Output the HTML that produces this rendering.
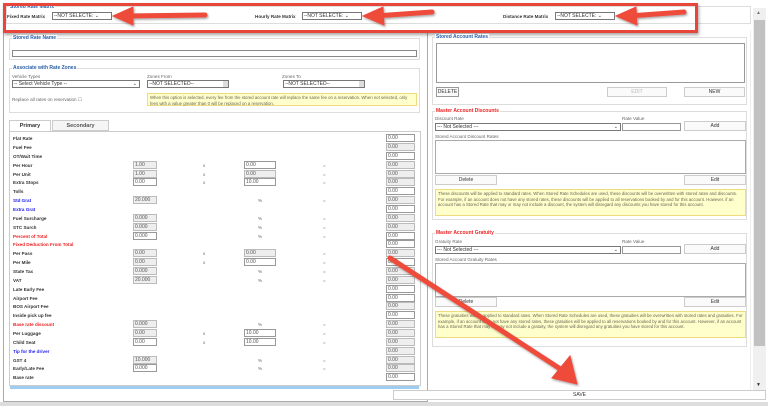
<!DOCTYPE html>
<html><head><meta charset="utf-8"><style>
*{box-sizing:border-box;margin:0;padding:0}
body{width:768px;height:406px;background:#fff;position:relative;overflow:hidden;font-family:"Liberation Sans",sans-serif;font-size:5px;color:#333}
.a{position:absolute}
.fs{position:absolute;border:1px solid #ddd}
.lg{position:absolute;top:-4px;left:2px;background:#fff;font-weight:bold;font-size:5px;color:#2a5ea8;padding:0 1px}
.lg.r{color:#e22}
.in{position:absolute;height:8px;border:1px solid #999;background:#fff;font-size:5px;padding-left:1px;line-height:6px;color:#555}
.in.g{background:#eee;border-color:#bbb}
.sel{position:absolute;height:8px;border:1px solid #777;background:#fff;font-size:5px;line-height:6px;padding-left:1px;color:#333}
.btn{position:absolute;height:10px;border:1px solid #ccc;background:#fafafa;font-size:5px;text-align:center;line-height:8px;color:#333}
.box{position:absolute;border:1px solid #aaa;background:#fff}
.note{position:absolute;background:#ffffcc;border:1px solid #eedb80;font-size:4.3px;line-height:5.5px;padding:1px 2px;color:#665}
.lb{position:absolute;font-size:4.6px;font-weight:bold;color:#333;left:13px}
.lb.b{color:#22e}.lb.r{color:#e22}
.sm{position:absolute;font-size:4.6px;color:#666}
</style></head><body>
<!-- outer frame -->
<div class="a" style="left:3px;top:30px;width:425px;height:372px;border:1px solid #aaa;border-top:none"></div>
<!-- top matrix -->
<div class="fs" style="left:6px;top:6px;width:745px;height:18px"><div class="lg" style="top:-3px">Stored Rate Matrix</div></div>
<div class="lb" style="left:7px;top:14px">Fixed Rate Matrix</div>
<div class="sel" style="left:52px;top:12px;width:60px">--NOT SELECTE: ⌄</div>
<div class="lb" style="left:255px;top:14px">Hourly Rate Matrix</div>
<div class="sel" style="left:302px;top:12px;width:60px">--NOT SELECTE: ⌄</div>
<div class="lb" style="left:503px;top:14px">Distance Rate Matrix</div>
<div class="sel" style="left:555px;top:12px;width:60px">--NOT SELECTE: ⌄</div>
<div class="a" style="left:3px;top:3px;width:695px;height:30px;border:3px solid #e8463a;box-shadow:1px 2px 3px rgba(0,0,0,.35)"></div>
<!-- scrollbar -->
<div class="a" style="left:753px;top:8px;width:13px;height:384px;background:#f0f0f0"></div>
<div class="a" style="left:754px;top:20px;width:11px;height:326px;background:#c1c1c1"></div>
<div class="a" style="left:756px;top:10px;font-size:5px;color:#777">▲</div>
<div class="a" style="left:756px;top:382px;font-size:5px;color:#333">▼</div>
<!-- stored rate name -->
<div class="fs" style="left:9px;top:38px;width:411px;height:22px"><div class="lg">Stored Rate Name</div></div>
<div class="in" style="left:12px;top:50px;width:405px;height:7px;border-color:#888"></div>
<!-- associate -->
<div class="fs" style="left:9px;top:68px;width:411px;height:45px"><div class="lg">Associate with Rate Zones</div></div>
<div class="sm" style="left:12px;top:74px">Vehicle Types</div>
<div class="sel" style="left:12px;top:80px;width:128px">-- Select Vehicle Type --<span style="float:right;padding-right:2px">⌄</span></div>
<div class="sm" style="left:147px;top:74px">Zones From</div>
<div class="sel" style="left:147px;top:80px;width:82px">--NOT SELECTED--<span style="float:right;background:#ddd;width:5px;height:6px"></span></div>
<div class="sm" style="left:282px;top:74px">Zones To</div>
<div class="sel" style="left:283px;top:80px;width:82px">--NOT SELECTED--<span style="float:right;background:#ddd;width:5px;height:6px"></span></div>
<div class="sm" style="left:12px;top:97px">Replace all rates on reservation ☐</div>
<div class="note" style="left:147px;top:93px;width:270px;height:13px">When this option is selected, every fee from the stored account rate will replace the same fee on a reservation. When not selected, only fees with a value greater than 0 will be replaced on a reservation.</div>
<!-- tabs -->
<div class="a" style="left:9px;top:120px;width:42px;height:12px;border:1px solid #ccc;border-bottom:none;background:#fff;font-size:5.5px;font-weight:bold;text-align:center;line-height:10px">Primary</div>
<div class="a" style="left:52px;top:120px;width:57px;height:11px;border:1px solid #ccc;background:#f5f5f5;font-size:5.5px;font-weight:bold;text-align:center;line-height:10px;color:#555">Secondary</div>
<div class="a" style="left:9px;top:131px;width:412px;height:255px;border:1px solid #ccc"></div>
<div class="a" style="left:10px;top:386px;width:409px;height:3px;background:#9fcdf2"></div>
<!-- rows -->
<div class="lb" style="top:136px">Flat Rate</div><div class="in" style="left:386px;top:134px;width:29px">0.00</div>
<div class="lb" style="top:145px">Fuel Fee</div><div class="in g" style="left:386px;top:143px;width:29px">0.00</div>
<div class="lb" style="top:154px">OT/Wait Time</div><div class="in" style="left:386px;top:152px;width:29px">0.00</div>
<div class="lb" style="top:163px">Per Hour</div><div class="in g" style="left:133px;top:161px;width:24px">1.00</div><div class="sm" style="left:203px;top:163px">x</div><div class="in" style="left:244px;top:161px;width:32px">0.00</div><div class="sm" style="left:323px;top:163px">=</div><div class="in g" style="left:386px;top:161px;width:29px">0.00</div>
<div class="lb" style="top:172px">Per Unit</div><div class="in g" style="left:133px;top:170px;width:24px">1.00</div><div class="sm" style="left:203px;top:172px">x</div><div class="in g" style="left:244px;top:170px;width:32px">0.00</div><div class="sm" style="left:323px;top:172px">=</div><div class="in g" style="left:386px;top:170px;width:29px">0.00</div>
<div class="lb" style="top:180px">Extra Stops</div><div class="in" style="left:133px;top:178px;width:24px">0.00</div><div class="sm" style="left:203px;top:180px">x</div><div class="in" style="left:244px;top:178px;width:32px">10.00</div><div class="sm" style="left:323px;top:180px">=</div><div class="in g" style="left:386px;top:178px;width:29px">0.00</div>
<div class="lb" style="top:189px">Tolls</div><div class="in" style="left:386px;top:187px;width:29px">0.00</div>
<div class="lb b" style="top:198px">Std Grat</div><div class="in g" style="left:133px;top:196px;width:24px">20.000</div><div class="sm" style="left:258px;top:198px">%</div><div class="sm" style="left:323px;top:198px">=</div><div class="in g" style="left:386px;top:196px;width:29px">0.00</div>
<div class="lb b" style="top:207px">Extra Grat</div><div class="in" style="left:386px;top:205px;width:29px">0.00</div>
<div class="lb" style="top:216px">Fuel Surcharge</div><div class="in g" style="left:133px;top:214px;width:24px">0.000</div><div class="sm" style="left:258px;top:216px">%</div><div class="sm" style="left:323px;top:216px">=</div><div class="in g" style="left:386px;top:214px;width:29px">0.00</div>
<div class="lb" style="top:225px">STC Surch</div><div class="in g" style="left:133px;top:223px;width:24px">0.000</div><div class="sm" style="left:258px;top:225px">%</div><div class="sm" style="left:323px;top:225px">=</div><div class="in g" style="left:386px;top:223px;width:29px">0.00</div>
<div class="lb r" style="top:234px">Percent of Total</div><div class="in" style="left:133px;top:232px;width:24px">0.000</div><div class="sm" style="left:258px;top:234px">%</div><div class="sm" style="left:323px;top:234px">=</div><div class="in" style="left:386px;top:232px;width:29px">0.00</div>
<div class="lb r" style="top:242px">Fixed Deduction From Total</div><div class="in" style="left:386px;top:240px;width:29px">0.00</div>
<div class="lb" style="top:251px">Per Pass</div><div class="in g" style="left:133px;top:249px;width:24px">0.00</div><div class="sm" style="left:203px;top:251px">x</div><div class="in g" style="left:244px;top:249px;width:32px">0.00</div><div class="sm" style="left:323px;top:251px">=</div><div class="in g" style="left:386px;top:249px;width:29px">0.00</div>
<div class="lb" style="top:260px">Per Mile</div><div class="in g" style="left:133px;top:258px;width:24px">0.00</div><div class="sm" style="left:203px;top:260px">x</div><div class="in" style="left:244px;top:258px;width:32px">0.00</div><div class="sm" style="left:323px;top:260px">=</div><div class="in" style="left:386px;top:258px;width:29px">0.00</div>
<div class="lb" style="top:269px">State Tax</div><div class="in g" style="left:133px;top:267px;width:24px">0.000</div><div class="sm" style="left:258px;top:269px">%</div><div class="sm" style="left:323px;top:269px">=</div><div class="in g" style="left:386px;top:267px;width:29px">0.00</div>
<div class="lb" style="top:278px">VAT</div><div class="in g" style="left:133px;top:276px;width:24px">20.000</div><div class="sm" style="left:258px;top:278px">%</div><div class="sm" style="left:323px;top:278px">=</div><div class="in g" style="left:386px;top:276px;width:29px">0.00</div>
<div class="lb" style="top:287px">Late Early Fee</div><div class="in" style="left:386px;top:285px;width:29px">0.00</div>
<div class="lb" style="top:296px">Airport Fee</div><div class="in" style="left:386px;top:294px;width:29px">0.00</div>
<div class="lb" style="top:304px">BOS Airport Fee</div><div class="in g" style="left:386px;top:302px;width:29px">0.00</div>
<div class="lb" style="top:313px">Inside pick up fee</div><div class="in" style="left:386px;top:311px;width:29px">0.00</div>
<div class="lb r" style="top:322px">Base rate discount</div><div class="in g" style="left:133px;top:320px;width:24px">0.000</div><div class="sm" style="left:258px;top:322px">%</div><div class="sm" style="left:323px;top:322px">=</div><div class="in g" style="left:386px;top:320px;width:29px">0.00</div>
<div class="lb" style="top:331px">Per Luggage</div><div class="in g" style="left:133px;top:329px;width:24px">0.00</div><div class="sm" style="left:203px;top:331px">x</div><div class="in" style="left:244px;top:329px;width:32px">10.00</div><div class="sm" style="left:323px;top:331px">=</div><div class="in g" style="left:386px;top:329px;width:29px">0.00</div>
<div class="lb" style="top:340px">Child Seat</div><div class="in" style="left:133px;top:338px;width:24px">0.00</div><div class="sm" style="left:203px;top:340px">x</div><div class="in" style="left:244px;top:338px;width:32px">10.00</div><div class="sm" style="left:323px;top:340px">=</div><div class="in g" style="left:386px;top:338px;width:29px">0.00</div>
<div class="lb b" style="top:349px">Tip for the driver</div><div class="in g" style="left:386px;top:347px;width:29px">0.00</div>
<div class="lb" style="top:358px">GST 4</div><div class="in g" style="left:133px;top:356px;width:24px">10.000</div><div class="sm" style="left:258px;top:358px">%</div><div class="sm" style="left:323px;top:358px">=</div><div class="in g" style="left:386px;top:356px;width:29px">0.00</div>
<div class="lb" style="top:366px">Early/Late Fee</div><div class="in" style="left:133px;top:364px;width:24px">0.000</div><div class="sm" style="left:258px;top:366px">%</div><div class="sm" style="left:323px;top:366px">=</div><div class="in g" style="left:386px;top:364px;width:29px">0.00</div>
<div class="lb" style="top:375px">Base rate</div><div class="in" style="left:386px;top:373px;width:29px">0.00</div>
<!-- right panel -->
<div class="a" style="left:428px;top:30px;width:323px;height:360px;border-right:1px solid #eee"></div>
<div class="fs" style="left:432px;top:37px;width:315px;height:68px"><div class="lg">Stored Account Rates</div></div>
<div class="box" style="left:436px;top:43px;width:309px;height:40px;border-color:#999"></div>
<div class="btn" style="left:436px;top:87px;width:23px;border-color:#999">DELETE</div>
<div class="btn" style="left:607px;top:87px;width:60px;color:#bbb">EDIT</div>
<div class="btn" style="left:684px;top:87px;width:61px">NEW</div>
<div class="fs" style="left:432px;top:111px;width:315px;height:109px"><div class="lg r">Master Account Discounts</div></div>
<div class="sm" style="left:435px;top:116px">Discount Rate</div>
<div class="sel" style="left:435px;top:123px;width:186px">--- Not Selected ---<span style="float:right;padding-right:2px">⌄</span></div>
<div class="sm" style="left:622px;top:116px">Rate Value</div>
<div class="in" style="left:622px;top:123px;width:59px"></div>
<div class="btn" style="left:684px;top:121px;width:62px">Add</div>
<div class="sm" style="left:435px;top:134px">Stored Account Discount Rates</div>
<div class="box" style="left:435px;top:140px;width:311px;height:34px"></div>
<div class="btn" style="left:435px;top:175px;width:62px">Delete</div>
<div class="btn" style="left:684px;top:175px;width:62px">Edit</div>
<div class="note" style="left:435px;top:189px;width:311px;height:27px">These discounts will be applied to standard rates. When Stored Rate Schedules are used, these discounts will be overwritten with stored rates and discounts. For example, if an account does not have any stored rates, these discounts will be applied to all reservations booked by and for this account. However, if an account has a Stored Rate that may or may not include a discount, the system will disregard any discounts you have stored for this account.</div>
<div class="fs" style="left:432px;top:233px;width:315px;height:114px"><div class="lg r">Master Account Gratuity</div></div>
<div class="sm" style="left:435px;top:239px">Gratuity Rate</div>
<div class="sel" style="left:435px;top:246px;width:186px">--- Not Selected ---<span style="float:right;padding-right:2px">⌄</span></div>
<div class="sm" style="left:622px;top:239px">Rate Value</div>
<div class="in" style="left:622px;top:246px;width:59px"></div>
<div class="btn" style="left:684px;top:244px;width:62px">Add</div>
<div class="sm" style="left:435px;top:257px">Stored Account Gratuity Rates</div>
<div class="box" style="left:435px;top:263px;width:311px;height:34px"></div>
<div class="btn" style="left:435px;top:297px;width:62px">Delete</div>
<div class="btn" style="left:684px;top:297px;width:62px">Edit</div>
<div class="note" style="left:435px;top:311px;width:311px;height:27px">These gratuities will be applied to standard rates. When Stored Rate Schedules are used, these gratuities will be overwritten with stored rates and gratuities. For example, if an account does not have any stored rates, these gratuities will be applied to all reservations booked by and for this account. However, if an account has a Stored Rate that may or may not include a gratuity, the system will disregard any gratuities you have stored for this account.</div>
<!-- save -->
<div class="a" style="left:393px;top:390px;width:373px;height:10px;border:1px solid #ccc;background:#fff;text-align:center;font-size:5px;line-height:8px">SAVE</div>
<div class="a" style="left:0;top:402px;width:768px;height:4px;background:#ddd"></div>
<!-- arrows -->
<svg class="a" style="left:0;top:0" width="768" height="406" viewBox="0 0 768 406">
<defs><filter id="sh"><feDropShadow dx="1" dy="1.5" stdDeviation="1" flood-opacity=".35"/></filter></defs>
<g fill="#ee4b3b" stroke="#ee4b3b" stroke-linecap="round" filter="url(#sh)">
<line x1="205" y1="15" x2="125" y2="16" stroke-width="5"/><polygon points="113,16 133,7 133,25" stroke-width="1"/>
<line x1="432" y1="12" x2="375" y2="16" stroke-width="5"/><polygon points="363,16 383,7 384,25" stroke-width="1"/>
<line x1="684" y1="12" x2="628" y2="16" stroke-width="5"/><polygon points="616,16 636,7 637,25" stroke-width="1"/>
<line x1="390" y1="258" x2="565" y2="372" stroke-width="5"/><polygon points="577,384 552,378 570,356" stroke-width="1"/>
</g></svg>
</body></html>
